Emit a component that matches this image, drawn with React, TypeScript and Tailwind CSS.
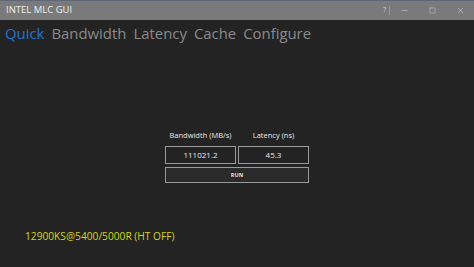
import { Minus, Square, X } from 'lucide-react'

const tabs = ['Quick', 'Bandwidth', 'Latency', 'Cache', 'Configure']

export default function App() {
  return (
    <div
      className="w-[474px] h-[267px] flex flex-col bg-[#232323] overflow-hidden"
      style={{ fontFamily: '"Open Sans", "Noto Sans", sans-serif' }}
    >
      <div className="h-px bg-[#5f6678]" />
      <div className="h-[19px] flex items-center bg-[#7a7a7a] pl-[6px]">
        <span className="text-[9.5px] text-[#eeeeee]">INTEL MLC GUI</span>
        <div className="ml-auto flex items-center text-[#e0e0e0]">
          <span className="text-[7px] text-[#cfcfcf] mr-[3px]">?</span>
          <div className="w-px h-[9px] bg-[#999]" />
          <div className="w-[28px] flex justify-center">
            <Minus size={9} strokeWidth={1.2} />
          </div>
          <div className="w-[28px] flex justify-center">
            <Square size={7} strokeWidth={1.4} />
          </div>
          <div className="w-[28px] flex justify-center">
            <X size={9} strokeWidth={1.2} />
          </div>
        </div>
      </div>
      <div className="flex gap-[7px] pl-[5px] pt-[1px] text-[14.9px] leading-[24px]">
        {tabs.map((t, i) => (
          <span key={t} className={i === 0 ? 'text-[#1e73d6]' : 'text-[#8a8a8a]'}>
            {t}
          </span>
        ))}
      </div>
      <div className="flex flex-col items-center mt-[85px]">
        <div className="flex gap-[2px] text-[7.5px] text-[#e8e8e8]">
          <div className="w-[71px] text-center">Bandwidth (MB/s)</div>
          <div className="w-[71px] text-center">Latency (ns)</div>
        </div>
        <div className="flex gap-[2px] mt-[5px]">
          <div className="w-[71px] h-[18px] border border-[#9a9a9a] flex items-center justify-center text-[8px] text-[#e8e8e8]">
            111021.2
          </div>
          <div className="w-[71px] h-[18px] border border-[#9a9a9a] flex items-center justify-center text-[8px] text-[#e8e8e8]">
            45.3
          </div>
        </div>
        <div className="w-[144px] h-[16px] mt-[3px] border border-[#9a9a9a] bg-[#2a2a2a] flex items-center justify-center text-[5.5px] font-bold text-[#e0e0e0]">
          RUN
        </div>
      </div>
      <div className="pl-[25px] mt-[46px] text-[10.2px] text-[#d6d41e]">12900KS@5400/5000R (HT OFF)</div>
    </div>
  )
}
